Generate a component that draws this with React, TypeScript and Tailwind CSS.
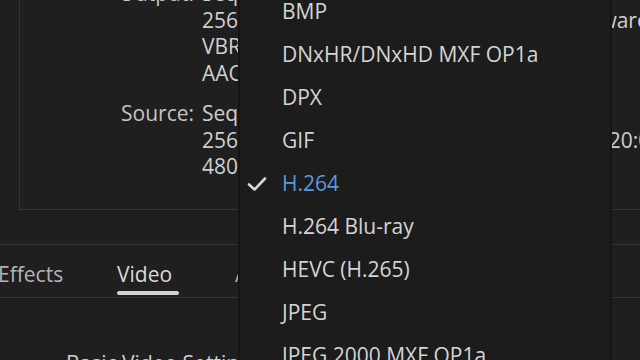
const formats = [
  "BMP",
  "DNxHR/DNxHD MXF OP1a",
  "DPX",
  "GIF",
  "H.264",
  "H.264 Blu-ray",
  "HEVC (H.265)",
  "JPEG",
  "JPEG 2000 MXF OP1a",
];

const selected = "H.264";

function Check() {
  return (
    <svg width="20" height="16" viewBox="0 0 20 16" fill="none">
      <path
        d="M2 8.5 L7.5 13.5 L18 2.5"
        stroke="#d6d6d6"
        strokeWidth="2.6"
        strokeLinecap="round"
        strokeLinejoin="round"
      />
    </svg>
  );
}

export default function App() {
  return (
    <div
      className="relative w-[640px] h-[360px] overflow-hidden bg-[#1f1f1f] text-[#cfcfcf]"
      style={{ fontFamily: '"Open Sans", "Noto Sans", sans-serif' }}
    >
      {/* summary panel underneath the menu */}
      <div className="flex flex-col">
        <div className="ml-[19px] -mt-[20px] h-[230px] border-l border-b border-[#343434]">
          <div className="grid grid-cols-[174px_1fr] gap-x-[8px] text-[21px] leading-[26.5px] whitespace-nowrap">
            <div className="text-right text-[#c4c4c4]">Output:</div>
            <div className="flex flex-col">
              <span>Sequence 01.mp4</span>
              <span>2560x1440 (1.0), 60 fps, Progressive, Software</span>
              <span>VBR, 1 pass, Target 10.00 Mbps</span>
              <span>AAC, 320 kbps, 48 kHz, Stereo</span>
            </div>
            <div className="text-right text-[#c4c4c4] mt-[14px]">Source:</div>
            <div className="flex flex-col mt-[14px]">
              <span>Sequence, Sequence 01</span>
              <span>2560x1440 (1.0), 60 fps, Progressive, 0:00:20:00</span>
              <span>48000 Hz, Stereo</span>
            </div>
          </div>
        </div>

        <div className="mt-[34px] border-t border-b border-[#343434] h-[54px] flex text-[21px] leading-[24px] whitespace-nowrap">
          <div className="w-[119px] pt-[17px] -ml-[2px] text-[#b4b4b4]">Effects</div>
          <div className="flex flex-col items-start">
            <div className="pt-[17px] text-[#d8d8d8]">Video</div>
            <div className="flex-1" />
            <div className="w-[62px] h-[4px] rounded-full bg-[#d2d2d2] mb-[2px]" />
          </div>
          <div className="ml-[56px] pt-[17px] text-[#b4b4b4]">Audio</div>
        </div>

        <div className="mt-[53px] ml-[30px] flex items-center gap-[18px] text-[21px] leading-[24px] whitespace-nowrap">
          <span className="text-[#bdbdbd]">⌄</span>
          <span>Basic Video Settings</span>
        </div>
      </div>

      {/* format dropdown */}
      <div className="absolute left-[238px] top-[-10px] w-[374px] h-[400px] bg-[#1c1c1c] border-x-2 border-[#141414]">
        {formats.map((f) => (
          <div key={f} className="relative h-[43px] flex items-center pl-[42px] text-[21px] whitespace-nowrap">
            {f === selected && (
              <span className="absolute left-[7px] top-1/2 -translate-y-1/2 flex">
                <Check />
              </span>
            )}
            <span className={f === selected ? "text-[#5d97dc]" : "text-[#d4d4d4]"}>{f}</span>
          </div>
        ))}
      </div>
    </div>
  );
}
